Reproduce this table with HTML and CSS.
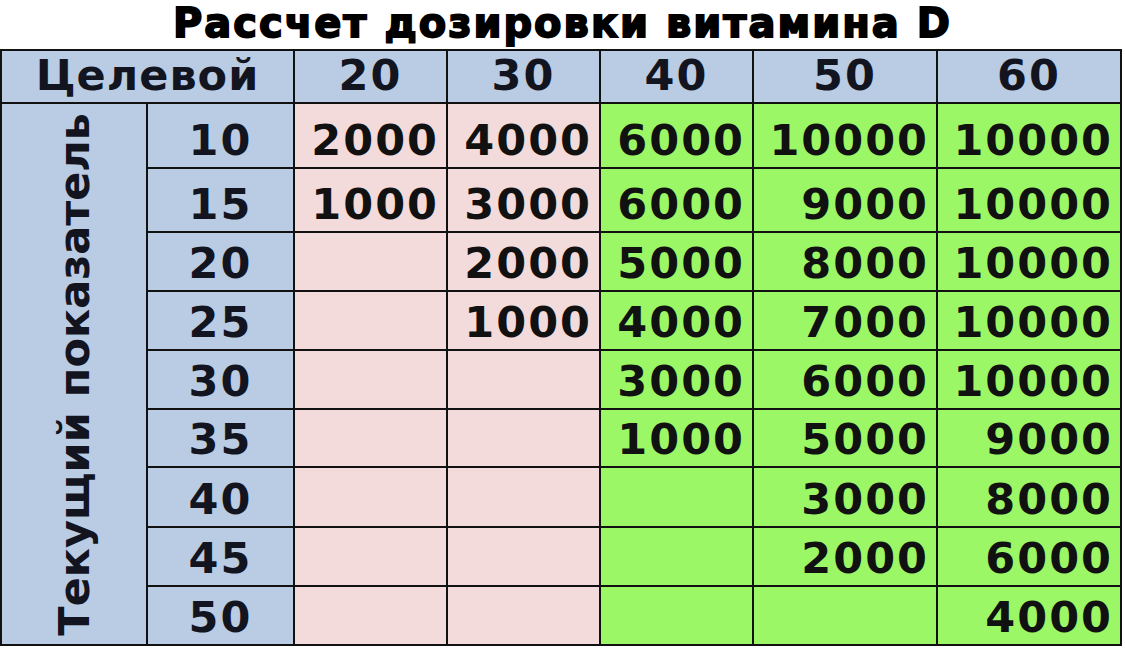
FILE: index.html
```html
<!DOCTYPE html>
<html lang="ru">
<head>
<meta charset="utf-8">
<title>Рассчет дозировки витамина D</title>
<link rel="stylesheet" href="styles.css">
</head>
<body>
<div class="page">
  <h1 class="title">Рассчет дозировки витамина D</h1>
  <div class="grid">
    <div class="cell head span2">Целевой</div>
    <div class="cell head">20</div>
    <div class="cell head">30</div>
    <div class="cell head">40</div>
    <div class="cell head">50</div>
    <div class="cell head">60</div>
    <div class="cell head vlabel"><span>Текущий показатель</span></div>

    <div class="cell head">10</div>
    <div class="cell pink num">2000</div><div class="cell pink num">4000</div>
    <div class="cell green num">6000</div><div class="cell green num">10000</div><div class="cell green num">10000</div>

    <div class="cell head">15</div>
    <div class="cell pink num">1000</div><div class="cell pink num">3000</div>
    <div class="cell green num">6000</div><div class="cell green num">9000</div><div class="cell green num">10000</div>

    <div class="cell head">20</div>
    <div class="cell pink num"></div><div class="cell pink num">2000</div>
    <div class="cell green num">5000</div><div class="cell green num">8000</div><div class="cell green num">10000</div>

    <div class="cell head">25</div>
    <div class="cell pink num"></div><div class="cell pink num">1000</div>
    <div class="cell green num">4000</div><div class="cell green num">7000</div><div class="cell green num">10000</div>

    <div class="cell head">30</div>
    <div class="cell pink num"></div><div class="cell pink num"></div>
    <div class="cell green num">3000</div><div class="cell green num">6000</div><div class="cell green num">10000</div>

    <div class="cell head">35</div>
    <div class="cell pink num"></div><div class="cell pink num"></div>
    <div class="cell green num">1000</div><div class="cell green num">5000</div><div class="cell green num">9000</div>

    <div class="cell head">40</div>
    <div class="cell pink num"></div><div class="cell pink num"></div>
    <div class="cell green num"></div><div class="cell green num">3000</div><div class="cell green num">8000</div>

    <div class="cell head">45</div>
    <div class="cell pink num"></div><div class="cell pink num"></div>
    <div class="cell green num"></div><div class="cell green num">2000</div><div class="cell green num">6000</div>

    <div class="cell head">50</div>
    <div class="cell pink num"></div><div class="cell pink num"></div>
    <div class="cell green num"></div><div class="cell green num"></div><div class="cell green num">4000</div>
  </div>
</div>
</body>
</html>
```

FILE: styles.css
```css
html, body {
  margin: 0;
  padding: 0;
  background: #ffffff;
}

.page {
  width: 1125px;
  height: 664px;
  font-family: "DejaVu Sans", "Liberation Sans", sans-serif;
  color: #111111;
}

.title {
  margin: 0;
  height: 49px;
  font-size: 40px;
  font-weight: 700;
  line-height: 46px;
  text-align: center;
  letter-spacing: 2px;
  -webkit-text-stroke: 1.8px #000;
  color: #000;
}

.grid {
  width: 1118px;
  margin-left: 0;
  display: grid;
  grid-template-columns: 144px 145px 151px 151px 151px 182px 182px;
  grid-template-rows: 51px 63px 62px 57px 57px 57px 56px 58px 57px 57px;
  gap: 2px;
  padding: 2px;
  background: #111111;
}

.cell {
  display: flex;
  align-items: flex-end;
  justify-content: center;
  font-size: 43px;
  font-weight: 700;
  line-height: 43px;
  padding-bottom: 5px;
  box-sizing: border-box;
  letter-spacing: 2px;
}

.head {
  background: #b9cce4;
  color: #121420;
}

.span2 {
  grid-column: span 2;
  letter-spacing: 1px;
}

.vlabel {
  grid-column: 1;
  grid-row: 2 / span 9;
  align-items: center;
  padding: 0;
  letter-spacing: 0;
}

.vlabel span {
  writing-mode: vertical-rl;
  transform: rotate(180deg);
  white-space: nowrap;
  font-size: 43px;
  line-height: 43px;
  letter-spacing: 0;
}

.num {
  justify-content: flex-end;
  padding-right: 7px;
}

.pink {
  background: #f3dbdb;
}

.green {
  background: #9bf766;
}
```
